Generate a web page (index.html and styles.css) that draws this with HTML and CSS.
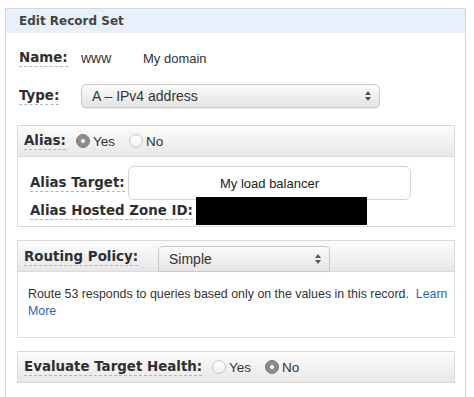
FILE: index.html
```html
<!DOCTYPE html>
<html>
<head>
<meta charset="utf-8">
<link rel="stylesheet" href="styles.css">
</head>
<body>
<div class="panel">
  <div class="panel-head">Edit Record Set</div>
  <div class="panel-body">
    <div class="row name-row">
      <span class="cell c62"><span class="label">Name:</span></span>
      <span class="www">www</span>
      <span class="domain">My domain</span>
    </div>
    <div class="row type-row">
      <span class="cell c62"><span class="label">Type:</span></span>
      <div class="select type-select">
        <span>A – IPv4 address</span>
        <span class="arrows"><i class="up"></i><i class="down"></i></span>
      </div>
    </div>

    <div class="box alias-box">
      <div class="box-head">
        <span class="cell c52"><span class="label">Alias:</span></span>
        <span class="radio on"></span><span class="opt">Yes</span>
        <span class="radio"></span><span class="opt">No</span>
      </div>
      <div class="alias-body">
        <div class="alias-row">
          <span class="cell c98"><span class="label">Alias Target:</span></span>
          <div class="input">My load balancer</div>
        </div>
        <div class="alias-row zone-row">
          <span class="cell c166"><span class="label">Alias Hosted Zone ID:</span></span>
          <div class="redact"></div>
        </div>
      </div>
    </div>

    <div class="box routing-box">
      <div class="box-head routing-head">
        <span class="cell c134"><span class="label">Routing Policy:</span></span>
        <div class="select routing-select">
          <span>Simple</span>
          <span class="arrows"><i class="up"></i><i class="down"></i></span>
        </div>
      </div>
      <div class="routing-body">
        <p class="line">Route 53 responds to queries based only on the values in this record.&nbsp; <a class="link">Learn</a></p>
        <p class="line"><a class="link">More</a></p>
      </div>
    </div>

    <div class="box eval-box">
      <div class="box-head">
        <span class="cell c188"><span class="label">Evaluate Target Health:</span></span>
        <span class="radio"></span><span class="opt">Yes</span>
        <span class="radio on"></span><span class="opt">No</span>
      </div>
    </div>
  </div>
</div>
</body>
</html>
```

FILE: styles.css
```css
html, body {
  margin: 0;
  padding: 0;
  background: #ffffff;
  overflow: hidden;
}

body {
  font-family: "Liberation Sans", Arial, sans-serif;
  color: #333;
}

.panel {
  margin: 8px 0 0 5px;
  width: 459px;
  min-height: 400px;
  border: 1px solid #d6d6d6;
  border-bottom: none;
}

.panel-head {
  height: 24px;
  background: #e8f0fb;
  padding-left: 13px;
  display: flex;
  align-items: center;
  font-family: "DejaVu Sans", Verdana, sans-serif;
  font-weight: bold;
  font-size: 12px;
  color: #444;
}

.panel-body {
  padding: 13px 10px 0 11px;
}

.cell {
  display: inline-flex;
  align-items: center;
  flex: none;
}

.c62 { width: 62px; }
.c52 { width: 52px; }
.c98 { width: 98px; }
.c134 { width: 134px; }
.c166 { width: 166px; }
.c188 { width: 188px; }

.label {
  font-family: "DejaVu Sans", Verdana, sans-serif;
  font-weight: bold;
  font-size: 13.4px;
  color: #2f2f2f;
  border-bottom: 1px dashed #b5b5b5;
  padding-bottom: 1px;
  line-height: 15px;
  white-space: nowrap;
}

.row {
  display: flex;
  align-items: center;
  padding-left: 2px;
}

.name-row {
  height: 24px;
}

.www {
  font-size: 14px;
  color: #333;
  width: 62px;
}

.domain {
  font-size: 13px;
  color: #333;
}

.type-row {
  margin-top: 14px;
  height: 24px;
}

.select {
  box-sizing: border-box;
  display: flex;
  align-items: center;
  justify-content: space-between;
  border: 1px solid #c9c9c9;
  border-radius: 5px;
  background: linear-gradient(#fbfbfb, #e4e4e4);
  box-shadow: 0 1px 1px rgba(0, 0, 0, 0.08);
  font-size: 14px;
  color: #333;
  padding: 0 8px 0 10px;
}

.type-select {
  width: 299px;
  height: 24px;
}

.arrows {
  display: flex;
  flex-direction: column;
  align-items: center;
  gap: 2px;
}

.arrows i {
  display: block;
  width: 0;
  height: 0;
  border-left: 3px solid transparent;
  border-right: 3px solid transparent;
}

.arrows .up {
  border-bottom: 4px solid #555;
}

.arrows .down {
  border-top: 4px solid #555;
}

.box {
  border: 1px solid #d9d9d9;
  width: 436px;
}

.box-head {
  height: 30px;
  display: flex;
  align-items: center;
  padding-left: 6px;
  background: linear-gradient(#fcfcfc, #e8e8e8);
}

.alias-box {
  margin-top: 17px;
}

.alias-box .box-head {
  border-bottom: 1px solid #dcdcdc;
}

.radio {
  box-sizing: border-box;
  width: 14px;
  height: 14px;
  border-radius: 50%;
  border: 1px solid #c4c4c4;
  background: linear-gradient(#ffffff, #f0f0f0);
  display: inline-flex;
  align-items: center;
  justify-content: center;
  margin-right: 3px;
  flex: none;
}

.radio.on {
  border-color: #7d7d7d;
  background: #8c8c8c;
}

.radio.on::after {
  content: "";
  width: 4px;
  height: 4px;
  border-radius: 50%;
  background: #fff;
}

.opt {
  font-size: 13.5px;
  color: #333;
  margin-right: 14px;
}

.alias-body {
  padding: 9px 12px 1px 12px;
}

.alias-row {
  display: flex;
  align-items: center;
}

.input {
  box-sizing: border-box;
  width: 283px;
  height: 34px;
  border: 1px solid #d4d4d4;
  border-radius: 6px;
  background: #fff;
  display: flex;
  align-items: center;
  justify-content: center;
  font-size: 13px;
  color: #222;
}

.zone-row {
  margin-top: -3px;
  height: 28px;
  position: relative;
}

.redact {
  width: 171px;
  height: 28px;
  background: #000;
  position: relative;
  z-index: 1;
}

.routing-box {
  margin-top: 13px;
}

.routing-head {
  border-bottom: 1px solid #dcdcdc;
  align-items: flex-end;
}

.routing-head .cell {
  align-self: center;
  margin-top: 3px;
}

.routing-select {
  width: 172px;
  height: 25px;
  border-bottom-left-radius: 0;
  border-bottom-right-radius: 0;
  border-bottom: none;
}

.routing-body {
  padding: 14px 4px 17px 10px;
  font-size: 12.4px;
  line-height: 17px;
  color: #333;
  height: 34px;
}

.line {
  margin: 0;
  white-space: nowrap;
}

.link {
  color: #2a6aa8;
  text-decoration: none;
}

.eval-box {
  margin-top: 13px;
}
```
